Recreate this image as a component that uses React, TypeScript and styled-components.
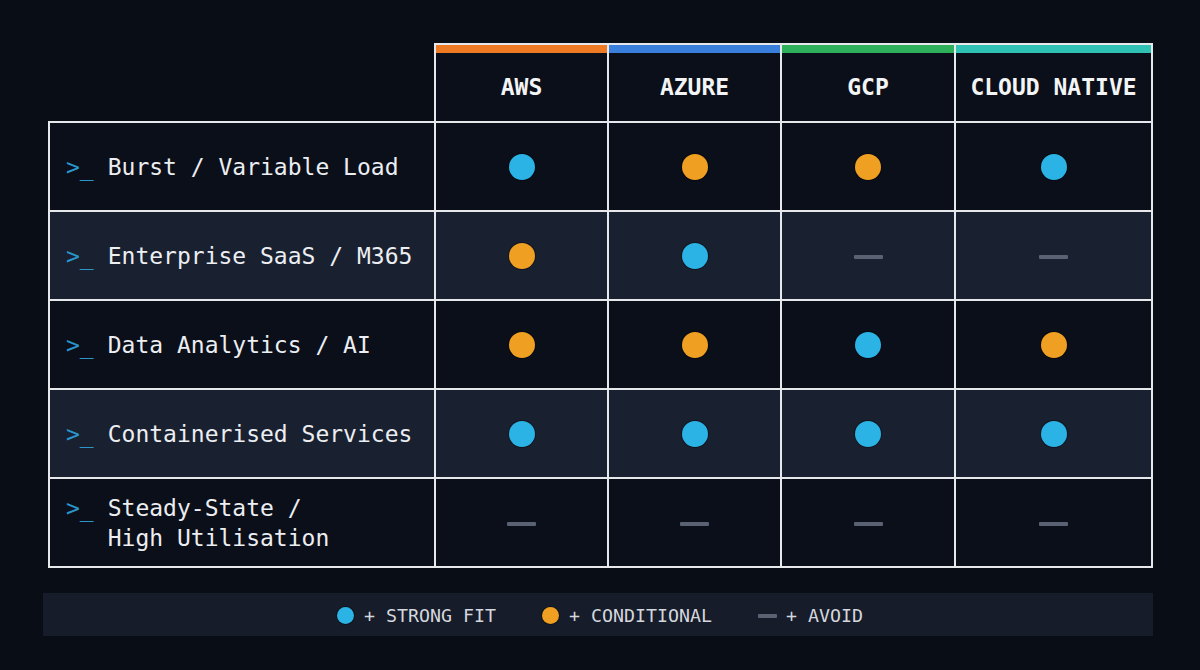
import React from "react";
import styled, { createGlobalStyle } from "styled-components";

const Global = createGlobalStyle`
  html, body { margin: 0; padding: 0; background: #090d16; }
  body { font-family: "DejaVu Sans Mono", "Liberation Mono", monospace; }
`;

const Page = styled.div`
  width: 1200px;
  height: 670px;
  box-sizing: border-box;
  padding: 43px 47px 0 43px;
  background: #090d16;
  display: flex;
  flex-direction: column;
`;

const Table = styled.table`
  border-collapse: collapse;
  margin-left: 5px;
  table-layout: fixed;
  width: 1103px;
`;

const Corner = styled.th`
  border: none;
  padding: 0;
`;

const HeadCell = styled.th`
  border: 2px solid #e6e8ec;
  padding: 0;
  height: 76px;
  vertical-align: top;
  background: #0b0f19;
`;

const HeadInner = styled.div`
  display: flex;
  flex-direction: column;
  height: 76px;
`;

const Bar = styled.div<{ $c: string }>`
  height: 8px;
  background: ${(p) => p.$c};
`;

const HeadText = styled.div`
  flex: 1;
  display: flex;
  align-items: center;
  justify-content: center;
  color: #f3f4f6;
  font-size: 23px;
  font-weight: bold;
  padding-bottom: 1px;
`;

const Row = styled.tr<{ $alt: boolean }>`
  background: ${(p) => (p.$alt ? "#192030" : "#0b0f19")};
`;

const LabelCell = styled.td`
  border: 2px solid #e6e8ec;
  height: 87px;
  padding: 0 0 0 16px;
  box-sizing: border-box;
  vertical-align: middle;
`;

const Label = styled.div`
  display: flex;
  gap: 14px;
  color: #eceef2;
  font-size: 23px;
  line-height: 30px;
`;

const Prompt = styled.span`
  color: #2a96cb;
  flex: none;
`;

const Cell = styled.td`
  border: 2px solid #e6e8ec;
  height: 87px;
  padding: 0;
  text-align: center;
  vertical-align: middle;
`;

const Dot = styled.span<{ $c: string; $size: number }>`
  display: inline-block;
  flex: none;
  width: ${(p) => p.$size}px;
  height: ${(p) => p.$size}px;
  border-radius: 50%;
  background: ${(p) => p.$c};
  box-shadow: 0 0 0 1px rgba(0, 0, 0, 0.35);
  vertical-align: middle;
`;

const Dash = styled.span<{ $w: number }>`
  display: inline-block;
  flex: none;
  width: ${(p) => p.$w}px;
  height: 4px;
  border-radius: 1px;
  background: #5a6172;
  vertical-align: middle;
`;

const Legend = styled.div`
  margin-top: 25px;
  height: 43px;
  background: #161c29;
  display: flex;
  align-items: center;
  justify-content: center;
  gap: 46px;
  padding-left: 4px;
  padding-top: 2px;
  box-sizing: border-box;
`;

const LegendItem = styled.div<{ $gap: number }>`
  display: flex;
  align-items: center;
  gap: ${(p) => p.$gap}px;
  color: #d4d7de;
  font-size: 18.3px;
`;

const BLUE = "#2bb3e6";
const ORANGE = "#efa022";

type V = "s" | "c" | "a";

const cols = [
  { name: "AWS", color: "#ee7a24", w: 173 },
  { name: "AZURE", color: "#3a7fdc", w: 173 },
  { name: "GCP", color: "#2eb05a", w: 174 },
  { name: "CLOUD NATIVE", color: "#2fc1b4", w: 197 },
];

const rows: { label: string[]; v: V[] }[] = [
  { label: ["Burst / Variable Load"], v: ["s", "c", "c", "s"] },
  { label: ["Enterprise SaaS / M365"], v: ["c", "s", "a", "a"] },
  { label: ["Data Analytics / AI"], v: ["c", "c", "s", "c"] },
  { label: ["Containerised Services"], v: ["s", "s", "s", "s"] },
  { label: ["Steady-State /", "High Utilisation"], v: ["a", "a", "a", "a"] },
];

const Mark = ({ v }: { v: V }) =>
  v === "s" ? <Dot $c={BLUE} $size={26} /> : v === "c" ? <Dot $c={ORANGE} $size={26} /> : <Dash $w={29} />;

export default function App() {
  return (
    <>
      <Global />
      <Page>
        <Table>
          <colgroup>
            <col style={{ width: 386 }} />
            {cols.map((c) => (
              <col key={c.name} style={{ width: c.w }} />
            ))}
          </colgroup>
          <thead>
            <tr>
              <Corner />
              {cols.map((c) => (
                <HeadCell key={c.name}>
                  <HeadInner>
                    <Bar $c={c.color} />
                    <HeadText>{c.name}</HeadText>
                  </HeadInner>
                </HeadCell>
              ))}
            </tr>
          </thead>
          <tbody>
            {rows.map((r, i) => (
              <Row key={i} $alt={i % 2 === 1}>
                <LabelCell>
                  <Label>
                    <Prompt>&gt;_</Prompt>
                    <div>
                      {r.label.map((l) => (
                        <div key={l}>{l}</div>
                      ))}
                    </div>
                  </Label>
                </LabelCell>
                {r.v.map((v, j) => (
                  <Cell key={j}>
                    <Mark v={v} />
                  </Cell>
                ))}
              </Row>
            ))}
          </tbody>
        </Table>
        <Legend>
          <LegendItem $gap={10}>
            <Dot $c={BLUE} $size={17} />+ STRONG FIT
          </LegendItem>
          <LegendItem $gap={10}>
            <Dot $c={ORANGE} $size={17} />+ CONDITIONAL
          </LegendItem>
          <LegendItem $gap={9}>
            <Dash $w={19} />+ AVOID
          </LegendItem>
        </Legend>
      </Page>
    </>
  );
}
